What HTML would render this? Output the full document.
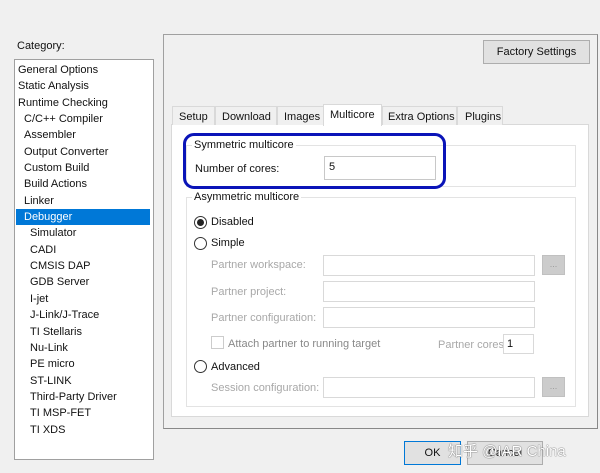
<!DOCTYPE html>
<html><head><style>
*{margin:0;padding:0;box-sizing:border-box}
body{width:600px;height:473px;background:#f0f0f0;font-family:"Liberation Sans",Arial,sans-serif;font-size:11px;color:#111;position:relative;overflow:hidden}
.a{position:absolute;white-space:nowrap}
.li{position:absolute;height:16px;line-height:17px;white-space:nowrap}
.g{color:#a8a8a8}
.in{position:absolute;background:#fff;border:1px solid #d9d9d9}
.rad{position:absolute;width:13px;height:13px;border:1px solid #333;border-radius:50%;background:#fff}
</style></head><body>
<div class="a" style="left:17px;top:40px">Category:</div>
<div class="a" style="left:14px;top:59px;width:140px;height:401px;background:#fff;border:1px solid #a0a0a0"></div>
<div class="a" style="left:16px;top:209px;width:134px;height:16px;background:#0078d7"></div>
<div class="li" style="left:18px;top:62px">General Options</div>
<div class="li" style="left:18px;top:78px">Static Analysis</div>
<div class="li" style="left:18px;top:95px">Runtime Checking</div>
<div class="li" style="left:24px;top:111px">C/C++ Compiler</div>
<div class="li" style="left:24px;top:127px">Assembler</div>
<div class="li" style="left:24px;top:144px">Output Converter</div>
<div class="li" style="left:24px;top:160px">Custom Build</div>
<div class="li" style="left:24px;top:176px">Build Actions</div>
<div class="li" style="left:24px;top:193px">Linker</div>
<div class="li" style="left:24px;top:209px;color:#fff">Debugger</div>
<div class="li" style="left:30px;top:225px">Simulator</div>
<div class="li" style="left:30px;top:242px">CADI</div>
<div class="li" style="left:30px;top:258px">CMSIS DAP</div>
<div class="li" style="left:30px;top:274px">GDB Server</div>
<div class="li" style="left:30px;top:291px">I-jet</div>
<div class="li" style="left:30px;top:307px">J-Link/J-Trace</div>
<div class="li" style="left:30px;top:324px">TI Stellaris</div>
<div class="li" style="left:30px;top:340px">Nu-Link</div>
<div class="li" style="left:30px;top:356px">PE micro</div>
<div class="li" style="left:30px;top:373px">ST-LINK</div>
<div class="li" style="left:30px;top:389px">Third-Party Driver</div>
<div class="li" style="left:30px;top:405px">TI MSP-FET</div>
<div class="li" style="left:30px;top:422px">TI XDS</div>

<div class="a" style="left:163px;top:34px;width:435px;height:395px;border:1px solid #a0a0a0;border-right-color:#888;border-bottom-color:#888"></div>
<div class="a" style="left:483px;top:40px;width:107px;height:24px;background:#e1e1e1;border:1px solid #adadad;text-align:center;line-height:23px">Factory Settings</div>

<div class="a" style="left:171px;top:124px;width:418px;height:293px;background:#fff;border:1px solid #d9d9d9"></div>
<div class="a" style="left:172px;top:106px;width:43px;height:19px;border:1px solid #d9d9d9;border-bottom:none;line-height:20px;padding-left:6px;background:#f0f0f0">Setup</div>
<div class="a" style="left:215px;top:106px;width:62px;height:19px;border:1px solid #d9d9d9;border-bottom:none;line-height:20px;padding-left:6px;background:#f0f0f0">Download</div>
<div class="a" style="left:277px;top:106px;width:47px;height:19px;border:1px solid #d9d9d9;border-bottom:none;line-height:20px;padding-left:6px;background:#f0f0f0">Images</div>
<div class="a" style="left:323px;top:104px;width:59px;height:22px;border:1px solid #d9d9d9;border-bottom:none;line-height:20px;padding-left:6px;background:#fff">Multicore</div>
<div class="a" style="left:382px;top:106px;width:75px;height:19px;border:1px solid #d9d9d9;border-bottom:none;line-height:20px;padding-left:5px;background:#f0f0f0">Extra Options</div>
<div class="a" style="left:457px;top:106px;width:46px;height:19px;border:1px solid #d9d9d9;border-bottom:none;line-height:20px;padding-left:7px;background:#f0f0f0">Plugins</div>

<div class="a" style="left:186px;top:145px;width:390px;height:42px;border:1px solid #e3e3e3"></div>
<div class="a" style="left:192px;top:139px;background:#fff;padding:0 2px">Symmetric multicore</div>
<div class="a" style="left:195px;top:163px">Number of cores:</div>
<div class="in" style="left:324px;top:156px;width:112px;height:24px;border-color:#c8c8c8;padding:4px 0 0 4px">5</div>
<div class="a" style="left:183px;top:133px;width:263px;height:56px;border:3px solid #0a14b8;border-radius:11px"></div>

<div class="a" style="left:186px;top:197px;width:390px;height:210px;border:1px solid #e3e3e3"></div>
<div class="a" style="left:192px;top:191px;background:#fff;padding:0 2px">Asymmetric multicore</div>
<div class="rad" style="left:194px;top:216px"></div><div class="a" style="left:197px;top:219px;width:7px;height:7px;border-radius:50%;background:#222"></div>
<div class="a" style="left:211px;top:216px">Disabled</div>
<div class="rad" style="left:194px;top:237px"></div>
<div class="a" style="left:211px;top:237px">Simple</div>
<div class="a g" style="left:211px;top:259px">Partner workspace:</div>
<div class="in" style="left:323px;top:255px;width:212px;height:21px"></div>
<div class="a" style="left:542px;top:255px;width:23px;height:20px;background:#ccc;border:1px solid #c0c0c0;color:#999;font-size:9px;text-align:center;line-height:16px">...</div>
<div class="a g" style="left:211px;top:286px">Partner project:</div>
<div class="in" style="left:323px;top:281px;width:212px;height:21px"></div>
<div class="a g" style="left:211px;top:312px">Partner configuration:</div>
<div class="in" style="left:323px;top:307px;width:212px;height:21px"></div>
<div class="a" style="left:211px;top:336px;width:13px;height:13px;border:1px solid #ccc;background:#fff"></div>
<div class="a g" style="left:228px;top:338px;color:#888">Attach partner to running target</div>
<div class="a g" style="left:438px;top:339px">Partner cores</div>
<div class="in" style="left:503px;top:334px;width:31px;height:20px;padding:3px 0 0 3px">1</div>
<div class="rad" style="left:194px;top:360px"></div>
<div class="a" style="left:211px;top:361px">Advanced</div>
<div class="a g" style="left:211px;top:382px">Session configuration:</div>
<div class="in" style="left:323px;top:377px;width:212px;height:21px"></div>
<div class="a" style="left:542px;top:377px;width:23px;height:20px;background:#ccc;border:1px solid #c0c0c0;color:#999;font-size:9px;text-align:center;line-height:16px">...</div>

<div class="a" style="left:404px;top:441px;width:57px;height:24px;background:#e1e1e1;border:1px solid #0078d7;text-align:center;line-height:23px">OK</div>
<div class="a" style="left:467px;top:441px;width:76px;height:24px;background:#e1e1e1;border:1px solid #adadad;text-align:center;line-height:23px">Cancel</div>
<div class="a" style="left:448px;top:440px;font-size:15px;color:#fff;font-family:'Liberation Sans','Noto Sans CJK SC',sans-serif;text-shadow:0 0 1px #666,0 0 1px #666">知乎 @IAR China</div>
</body></html>
